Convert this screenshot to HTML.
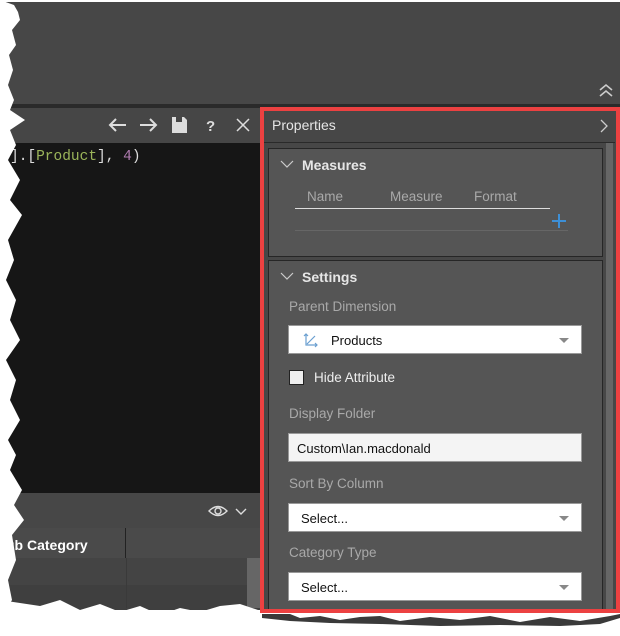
<!DOCTYPE html>
<html><head><style>
*{margin:0;padding:0;box-sizing:border-box}
body{width:620px;height:636px;background:#fff;position:relative;overflow:hidden;font-family:"Liberation Sans",sans-serif}
.a{position:absolute}
.lbl{color:#a9a9a9;font-size:13.5px}
.inp{position:absolute;left:288px;width:294px;height:29px;background:#fff;border:1px solid #999;font-size:13px;color:#111;padding:7px 0 0 12px}
.tri{position:absolute;right:12px;top:12px;width:0;height:0;border-left:5px solid transparent;border-right:5px solid transparent;border-top:5px solid #888}
</style></head><body>
<div class="a" style="left:0;top:2px;width:620px;height:102px;background:#474747"></div>
<div class="a" style="left:0;top:104px;width:620px;height:4px;background:#2a2a2a"></div>
<div class="a" style="left:0;top:108px;width:260px;height:35px;background:#464646"></div>
<div class="a" style="left:0;top:143px;width:260px;height:350px;background:#161616"></div>
<div class="a" style="left:0;top:493px;width:260px;height:35px;background:#474747"></div>
<div class="a" style="left:0;top:528px;width:260px;height:30px;background:#4a4a4a"></div>
<div class="a" style="left:125px;top:528px;width:1px;height:30px;background:#222"></div>
<div class="a" style="left:0;top:558px;width:260px;height:50px;background:#444"></div>
<div class="a" style="left:0;top:585px;width:260px;height:25px;background:#3f3f3f"></div>
<div class="a" style="left:126px;top:558px;width:1px;height:50px;background:#3a3a3a"></div>
<div class="a" style="left:247px;top:558px;width:13px;height:50px;background:#666"></div>
<div class="a" style="left:6px;top:537px;color:#fff;font-weight:bold;font-size:14px">ub Category</div>
<div class="a" style="left:10px;top:149px;font-family:'Liberation Mono',monospace;font-size:14.5px;color:#ddd">].[<span style="color:#9bb55a">Product</span>], <span style="color:#b07cb0">4</span>)</div>
<svg class="a" style="left:100px;top:112px" width="160" height="28" viewBox="0 0 160 28" fill="none" stroke="#ddd" stroke-width="2">
<path d="M26 13H10M16 7l-6 6 6 6"/><path d="M40 13h16M50 7l6 6-6 6"/>
<path d="M72 5h12l3 3v13H72z" fill="#ddd" stroke="none"/><rect x="76" y="5" width="6" height="5" fill="#464646" stroke="none"/>
<text x="106" y="19" fill="#ddd" stroke="none" font-size="15" font-weight="bold" font-family="Liberation Sans">?</text>
<path d="M137 7l12 12M149 7l-12 12" stroke-width="1.5"/></svg>
<svg class="a" style="left:205px;top:502px" width="52" height="18" fill="none" stroke="#ddd" stroke-width="1.4">
<path d="M4 9q9-9 18 0q-9 9-18 0z"/><circle cx="13" cy="9" r="3"/><path d="M31 7l5 5 5-5"/></svg>
<svg class="a" style="left:597px;top:82px" width="20" height="16" fill="none" stroke="#ccc" stroke-width="1.6"><path d="M3 8l6-5 6 5M3 14l6-5 6 5"/></svg>
<div class="a" style="left:260px;top:107px;width:360px;height:506px;border:4px solid #ec4141;background:#474747"></div>
<div class="a" style="left:264px;top:142px;width:351px;height:1px;background:#2a2a2a"></div>
<div class="a" style="left:272px;top:117px;color:#e6e6e6;font-size:14px">Properties</div>
<svg class="a" style="left:598px;top:118px" width="12" height="16" fill="none" stroke="#ccc" stroke-width="1.3"><path d="M3 2l6 6-6 6"/></svg>
<div class="a" style="left:606px;top:143px;width:7px;height:466px;background:#666"></div>
<div class="a" style="left:268px;top:148px;width:335px;height:109px;background:#555;border:1px solid #262626"></div>
<div class="a" style="left:268px;top:260px;width:335px;height:349px;background:#555;border:1px solid #262626;border-bottom:none"></div>
<svg class="a" style="left:280px;top:158px" width="14" height="12" fill="none" stroke="#ccc" stroke-width="1.2"><path d="M1 3l6 6 6-6"/></svg>
<div class="a" style="left:302px;top:157px;color:#e6e6e6;font-size:14px;font-weight:bold">Measures</div>
<div class="a lbl" style="left:307px;top:189px">Name</div>
<div class="a lbl" style="left:390px;top:189px">Measure</div>
<div class="a lbl" style="left:474px;top:189px">Format</div>
<div class="a" style="left:295px;top:208px;width:255px;height:1px;background:#ddd"></div>
<div class="a" style="left:295px;top:230px;width:273px;height:1px;background:#666"></div>
<svg class="a" style="left:551px;top:213px" width="16" height="16" stroke="#3d8fd6" stroke-width="2"><path d="M8 1v14M1 8h14"/></svg>
<svg class="a" style="left:280px;top:270px" width="14" height="12" fill="none" stroke="#ccc" stroke-width="1.2"><path d="M1 3l6 6 6-6"/></svg>
<div class="a" style="left:302px;top:269px;color:#e6e6e6;font-size:14px;font-weight:bold">Settings</div>
<div class="a lbl" style="left:289px;top:299px">Parent Dimension</div>
<div class="inp" style="top:325px;padding-left:42px">Products<div class="tri"></div></div>
<svg class="a" style="left:303px;top:332px" width="16" height="16" fill="none" stroke="#6a9fd0" stroke-width="1.2"><path d="M3 2v11h11M1 4l2-2 2 2M12 11l2 2-2 2M4 12l8-8"/></svg>
<div class="a" style="left:289px;top:370px;width:15px;height:15px;background:#eee;border:1px solid #222"></div>
<div class="a" style="left:314px;top:370px;color:#eee;font-size:13.5px">Hide Attribute</div>
<div class="a lbl" style="left:289px;top:406px">Display Folder</div>
<div class="inp" style="top:433px;background:#f4f4f4;padding-left:8px">Custom\Ian.macdonald</div>
<div class="a lbl" style="left:289px;top:476px">Sort By Column</div>
<div class="inp" style="top:503px">Select...<div class="tri"></div></div>
<div class="a lbl" style="left:289px;top:545px">Category Type</div>
<div class="inp" style="top:572px">Select...<div class="tri"></div></div>
<svg class="a" style="left:0;top:0" width="620" height="636">
<polygon fill="#fff" points="0,0 620,0 620,2 0,2 0,0"/>
<polygon fill="#fff" points="0,0 14,5 18,12 20,20 12,30 16,45 9,55 13,70 8,85 14,100 10,110 25,120 10,130 16,145 8,160 20,180 10,200 22,215 8,240 14,260 6,280 16,300 10,320 20,340 6,360 16,380 10,400 20,420 8,440 16,455 10,470 22,490 14,505 24,520 12,535 16,560 8,580 12,600 0,620"/>
<polygon fill="#fff" points="0,600 20,603 40,606 60,600 80,610 100,604 120,612 140,606 160,615 180,608 200,612 220,606 240,604 258,610 258,636 0,636"/>
<polygon fill="#fff" points="258,614 620,614 620,636 258,636"/>
<polygon fill="#3a3a3a" points="262,614 290,614 300,618 320,616 340,620 360,617 380,616 400,621 430,617 460,620 490,616 520,622 550,617 580,621 610,616 620,614 620,618 600,624 560,626 500,625 440,626 380,624 330,623 290,621 262,618"/>
</svg>
</body></html>
